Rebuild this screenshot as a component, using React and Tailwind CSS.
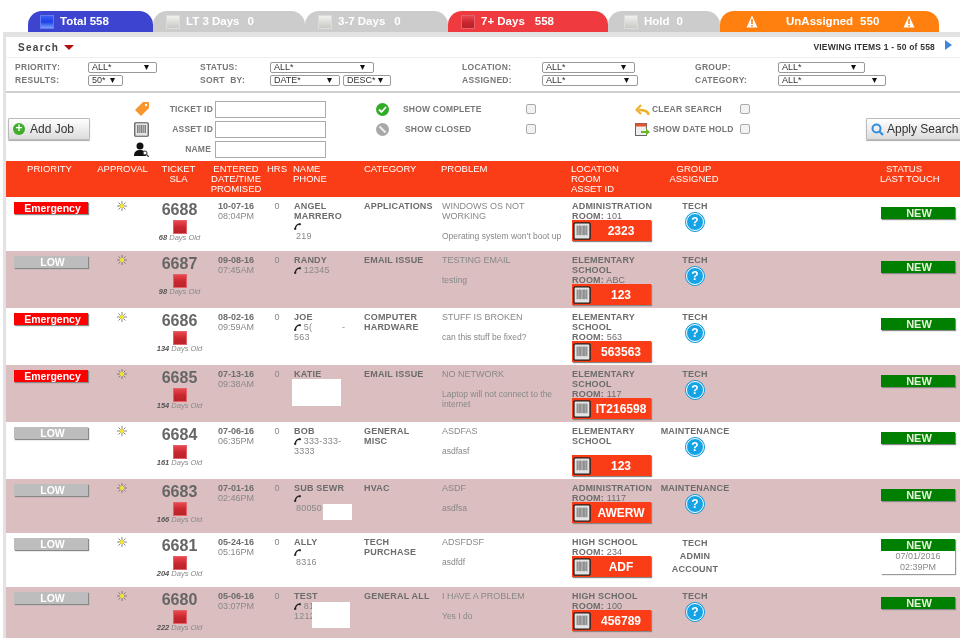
import React from 'react';

const tabs = [
  { label: 'Total', count: '558', w: 'w-[125px]', bg: 'bg-[#3d45d0]', box: 'blue', pl: 'pl-[12px]', numGap: 'ml-[3px]' },
  { label: 'LT 3 Days', count: '0', w: 'w-[152px]', bg: 'bg-[#cccccc]', box: 'gray', pl: 'pl-[13px]', numGap: 'ml-[8px]' },
  { label: '3-7 Days', count: '0', w: 'w-[143px]', bg: 'bg-[#cccccc]', box: 'gray', pl: 'pl-[13px]', numGap: 'ml-[9px]' },
  { label: '7+ Days', count: '558', w: 'w-[160px]', bg: 'bg-[#ef3b3f]', box: 'red', pl: 'pl-[13px]', numGap: 'ml-[10px]' },
  { label: 'Hold', count: '0', w: 'w-[112px]', bg: 'bg-[#cccccc]', box: 'gray', pl: 'pl-[16px]', numGap: 'ml-[7px]' },
];

const rows = [
  { pri: 'Emergency', id: '6688', age: '68', date: '10-07-16', time: '08:04PM', name: ['ANGEL', 'MARRERO'], phone: [null, '219'], cat: ['APPLICATIONS'], prob: ['WINDOWS OS NOT', 'WORKING'], desc: "Operating system won't boot up", loc: ['ADMINISTRATION'], room: '101', asset: '2323', group: ['TECH'], h: 'h-[54px]' },
  { pri: 'LOW', id: '6687', age: '98', date: '09-08-16', time: '07:45AM', name: ['RANDY'], phone: ['12345'], cat: ['EMAIL ISSUE'], prob: ['TESTING EMAIL'], desc: 'testing', loc: ['ELEMENTARY', 'SCHOOL'], room: 'ABC', asset: '123', group: ['TECH'], h: 'h-[57px]' },
  { pri: 'Emergency', id: '6686', age: '134', date: '08-02-16', time: '09:59AM', name: ['JOE'], phone: ['5(', '563'], dash: true, cat: ['COMPUTER', 'HARDWARE'], prob: ['STUFF IS BROKEN'], desc: 'can this stuff be fixed?', loc: ['ELEMENTARY', 'SCHOOL'], room: '563', asset: '563563', group: ['TECH'], h: 'h-[57px]' },
  { pri: 'Emergency', id: '6685', age: '154', date: '07-13-16', time: '09:38AM', name: ['KATIE'], redact: 'left-[1px] top-[14px] w-[49px] h-[27px]', cat: ['EMAIL ISSUE'], prob: ['NO NETWORK'], desc: 'Laptop will not connect to the internet', loc: ['ELEMENTARY', 'SCHOOL'], room: '117', asset: 'IT216598', group: ['TECH'], h: 'h-[57px]' },
  { pri: 'LOW', id: '6684', age: '161', date: '07-06-16', time: '06:35PM', name: ['BOB'], phone: ['333-333-', '3333'], cat: ['GENERAL', 'MISC'], prob: ['ASDFAS'], desc: 'asdfasf', loc: ['ELEMENTARY', 'SCHOOL'], asset: '123', blankRoom: true, group: ['MAINTENANCE'], h: 'h-[57px]' },
  { pri: 'LOW', id: '6683', age: '166', date: '07-01-16', time: '02:46PM', name: ['SUB SEWR'], phone: [null, '80050'], redact: 'left-[32px] top-[25px] w-[29px] h-[16px]', cat: ['HVAC'], prob: ['ASDF'], desc: 'asdfsa', loc: ['ADMINISTRATION'], room: '1117', asset: 'AWERW', group: ['MAINTENANCE'], h: 'h-[54px]' },
  { pri: 'LOW', id: '6681', age: '204', date: '05-24-16', time: '05:16PM', name: ['ALLY'], phone: [null, '8316'], cat: ['TECH', 'PURCHASE'], prob: ['ADSFDSF'], desc: 'asdfdf', loc: ['HIGH SCHOOL'], room: '234', asset: 'ADF', group: ['TECH', 'ADMIN', 'ACCOUNT'], touch: ['07/01/2016', '02:39PM'], h: 'h-[54px]' },
  { pri: 'LOW', id: '6680', age: '222', date: '05-06-16', time: '03:07PM', name: ['TEST'], phone: ['81', '1212'], redact: 'left-[21px] top-[15px] w-[38px] h-[26px]', cat: ['GENERAL ALL'], prob: ['I HAVE A PROBLEM'], desc: 'Yes I do', loc: ['HIGH SCHOOL'], room: '100', asset: '456789', group: ['TECH'], h: 'h-[54px]' },
];

const rowGrid = 'grid grid-cols-[87px_59px_53px_62px_24px_69px_80px_131px_90px_70px_149px_80px]';

const Square = ({ tone }) => {
  const cls = {
    blue: 'from-[#3f5cf5] via-[#1d3fe6] to-[#7d9bff] border-[#5f7cf0]',
    gray: 'from-[#f0f0ee] to-[#c9c9c5] border-[#dcdcd8]',
    red: 'from-[#e8474e] via-[#cb262e] to-[#b8242b] border-[#e4636a]',
  }[tone];
  return <span className={`block w-[14px] h-[14px] border bg-linear-to-b shrink-0 ${cls}`} />;
};

const Warn = () => (
  <svg width="12" height="13" viewBox="0 0 12 13">
    <path d="M6 .5 11.5 12.5H.5Z" fill="#fff" />
    <rect x="5.2" y="4" width="1.6" height="5" fill="#ff7f0f" />
    <rect x="5.2" y="10" width="1.6" height="1.5" fill="#ff7f0f" />
  </svg>
);

const Sel = ({ w, children = 'ALL*', arrow }) => (
  <div className={`relative h-[11px] ${w} border border-[#999] rounded-[2px] bg-white text-[9px] leading-[9px] pl-[3px] text-[#333]`}>
    {children}
    <svg className={`absolute top-[2px] ${arrow}`} width="5" height="5" viewBox="0 0 5 5"><path d="M0 0H5L2.5 5Z" fill="#111" /></svg>
  </div>
);

const Label = ({ children }) => (
  <div className="text-[8.5px] leading-[11px] font-bold text-[#777] tracking-[0.3px] whitespace-nowrap">{children}</div>
);

const Check = () => (
  <input type="checkbox" className="appearance-none block w-[10px] h-[10px] border border-[#aaa] rounded-[2px] bg-[#f2f2f2]" />
);

const Field = () => (
  <div className="pl-[2px]"><input className="block w-[111px] h-[17px] border border-[#aaa] bg-white" /></div>
);

const Btn = ({ w, children }) => (
  <div className={`${w} h-[22px] border border-[#bbb] rounded-[1px] bg-linear-to-b from-white to-[#dcdcdc] flex items-center pl-[4px] text-[12px] font-normal tracking-normal text-[#333] shadow-[0_1px_1px_#aaa]`}>
    {children}
  </div>
);

const Barcode = ({ size = 15, frame = '#555' }) => (
  <svg width={size} height={size} viewBox="0 0 15 15">
    <rect x=".75" y=".75" width="13.5" height="13.5" rx="1" fill="#e4e4e4" stroke={frame} strokeWidth="1.2" />
    <path d="M3.5 3v8M5 3v8M6 3v8M7.5 3v8M9 3v8M10 3v8M11.5 3v8" stroke="#666" strokeWidth=".8" />
  </svg>
);

const Sun = () => (
  <svg width="10" height="10" viewBox="0 0 10 10">
    <path d="M5 0v10M0 5h10M1.500 1.500l7 7M8.500 1.500l-7 7" stroke="#666" strokeWidth=".8" />
    <circle cx="5" cy="5" r="2.2" fill="#f2e23a" />
  </svg>
);

const PhoneIcon = () => (
  <svg className="inline-block align-[-1px]" width="7" height="7" viewBox="0 0 7 7">
    <path d="M6.500 1.200C3.500.8 1.400 2.600 1.200 6.200" fill="none" stroke="#222" strokeWidth="1.3" />
    <rect x="4.800" y=".4" width="2" height="1.800" fill="#222" />
    <rect x=".2" y="4.800" width="2" height="2" fill="#222" />
  </svg>
);

const Question = () => (
  <div className="w-[20px] h-[20px] rounded-full bg-[#14a4e6] border border-[#1a9ad6] flex items-center justify-center">
    <div className="w-[18px] h-[18px] rounded-full border-[1.5px] border-white flex items-center justify-center text-white font-bold text-[12px] leading-none tracking-normal">?</div>
  </div>
);

const Row = ({ r, alt }) => (
  <div className={`${rowGrid} ${r.h} overflow-hidden text-[9px] leading-[10px] text-[#6c6c6c] ${alt ? 'bg-[#dbbfc0]' : 'bg-white'}`}>
    <div className="pl-[8px] pt-[5px]">
      <div className={`w-[74px] h-[12px] pl-[3px] flex items-center justify-center text-white font-bold text-[10.5px] leading-none shadow-[1px_1px_1px_#888] ${r.pri === 'LOW' ? 'bg-[#bdbdbd]' : 'bg-[#ff0000]'}`}>{r.pri}</div>
    </div>
    <div className="flex justify-center pt-[4px] pr-[2px]"><div><Sun /></div></div>
    <div className="flex flex-col items-center pt-[4px] pl-[2px]">
      <div className="text-[16px] leading-[18px] font-bold text-[#666]">{r.id}</div>
      <div className="mt-[1px]"><Square tone="red" /></div>
      <div className="text-[7.5px] leading-[10px] italic text-[#888] whitespace-nowrap mt-[-1px]"><b className="text-[#555]">{r.age}</b> Days Old</div>
    </div>
    <div className="pl-[13px] pt-[4px]">
      <div className="font-bold">{r.date}</div>
      <div className="text-[#888]">{r.time}</div>
    </div>
    <div className="text-center pr-[4px] pt-[4px] text-[#888]">0</div>
    <div className="relative pl-[3px] pt-[4px] tracking-[0.2px]">
      {r.name.map((n) => <div key={n} className="font-bold whitespace-nowrap">{n}</div>)}
      {r.phone && (
        <div className="text-[#888]">
          <div className="whitespace-nowrap"><PhoneIcon /> {r.phone[0]}{r.dash && <span className="ml-[30px]">-</span>}</div>
          {r.phone[1] && <div className={r.phone[0] ? '' : 'pl-[2px]'}>{r.phone[1]}</div>}
        </div>
      )}
      {r.redact && <div className={`absolute bg-white ${r.redact}`} />}
    </div>
    <div className="pl-[4px] pt-[4px] font-bold tracking-[0.2px]">
      {r.cat.map((c) => <div key={c} className="whitespace-nowrap">{c}</div>)}
    </div>
    <div className="pl-[2px] pt-[4px] pr-[2px] text-[#888]">
      {r.prob.map((p) => <div key={p}>{p}</div>)}
      <div className="text-[8.5px] mt-[10px]">{r.desc}</div>
    </div>
    <div className="pl-[1px] pt-[4px] tracking-[0.2px]">
      {r.loc.map((l) => <div key={l} className="font-bold whitespace-nowrap">{l}</div>)}
      {r.blankRoom ? <div className="h-[10px]" /> : <div><b>ROOM:</b> {r.room}</div>}
      <div className="w-[79px] h-[21px] -mt-[1px] bg-[#fb3d17] flex items-center shadow-[1px_1px_1px_#888] tracking-normal">
        <div className="ml-[1px] w-[18px] h-[18px] shrink-0 flex"><Barcode size={18} frame="#222" /></div>
        <div className="flex-1 text-center text-white font-bold text-[12px] leading-none">{r.asset}</div>
      </div>
    </div>
    <div className="flex flex-col items-center pt-[4px] pr-[2px] font-bold whitespace-nowrap tracking-[0.2px]">
      {r.group.length > 1
        ? r.group.map((g) => <div key={g} className="leading-[13px]">{g}</div>)
        : <div>{r.group[0]}</div>}
      {r.group.length === 1 && <div className="mt-[1px]"><Question /></div>}
    </div>
    <div />
    <div className={`${r.touch ? 'pt-[6px]' : 'pt-[10px]'} pl-[1px]`}>
      <div className="w-[74px] h-[12px] pl-[2px] bg-[#008000] flex items-center justify-center text-[#e4f4d8] font-bold text-[11px] leading-none shadow-[1px_1px_1px_#888]">NEW</div>
      {r.touch && (
        <div className="w-[74px] bg-white text-center text-[#888] leading-[11px] shadow-[1px_1px_1px_#999] pb-[1px]">
          {r.touch.map((t) => <div key={t}>{t}</div>)}
        </div>
      )}
    </div>
  </div>
);

export default function App() {
  return (
    <div className="w-[960px] h-[638px] overflow-hidden bg-white blur-[0.5px] font-['Liberation_Sans',Arial,sans-serif]">
      {/* tabs */}
      <div className="flex pt-[11px] pl-[28px] h-[32px]">
        {tabs.map((t) => (
          <div key={t.label} className={`${t.w} ${t.bg} ${t.pl} h-[21px] rounded-t-[14px] flex items-center text-white font-bold text-[11.5px] whitespace-nowrap`}>
            <Square tone={t.box} />
            <span className="ml-[6px]">{t.label}</span>
            <span className={t.numGap}>{t.count}</span>
          </div>
        ))}
        <div className="w-[219px] h-[21px] bg-[#ff7f0f] rounded-t-[14px] flex items-center text-white font-bold text-[11.5px] whitespace-nowrap pl-[26px]">
          <Warn />
          <span className="ml-[28px]">UnAssigned</span>
          <span className="ml-[7px]">550</span>
          <span className="ml-[24px]"><Warn /></span>
        </div>
      </div>

      <div className="ml-[3px] border-l-[3px] border-[#e2e2e2]">
        <div className="h-[5px] bg-[#e2e2e2] -ml-[3px]" />
        {/* search title */}
        <div className="h-[21px] flex items-center justify-between border-b border-[#eee]">
          <div className="flex items-center ml-[12px] text-[10px] font-bold text-[#444] tracking-[1.3px]">
            Search
            <svg className="ml-[5px]" width="10" height="5" viewBox="0 0 10 5"><path d="M0 0H10L5 5Z" fill="#b01010" /></svg>
          </div>
          <div className="flex items-center text-[8.5px] font-bold text-[#333] tracking-[0.2px] mr-[8px]">
            VIEWING ITEMS 1 - 50 of 558
            <svg className="ml-[10px] -mt-[4px]" width="7" height="10" viewBox="0 0 7 10"><path d="M0 0L7 5 0 10Z" fill="#3f86e0" /></svg>
          </div>
        </div>

        {/* filters */}
        <div className="grid grid-cols-[73px_112px_70px_192px_80px_153px_83px_1fr] gap-y-[1px] pl-[9px] pt-[4px] pb-[5px] items-center h-[33px]">
          <Label>PRIORITY:</Label><Sel w="w-[69px]" arrow="right-[7px]" />
          <Label>STATUS:</Label><Sel w="w-[104px]" arrow="right-[8px]" />
          <Label>LOCATION:</Label><Sel w="w-[93px]" arrow="right-[8px]" />
          <Label>GROUP:</Label><Sel w="w-[87px]" arrow="right-[8px]" />
          <Label>RESULTS:</Label><Sel w="w-[35px]" arrow="right-[7px]">50*</Sel>
          <Label>SORT&nbsp; BY:</Label>
          <div className="flex gap-[3px]">
            <Sel w="w-[70px]" arrow="right-[7px]">DATE*</Sel>
            <Sel w="w-[48px]" arrow="right-[7px]">DESC*</Sel>
          </div>
          <Label>ASSIGNED:</Label><Sel w="w-[96px]" arrow="right-[8px]" />
          <Label>CATEGORY:</Label><Sel w="w-[108px]" arrow="right-[8px]" />
        </div>
        <div className="h-[2px] bg-[#cfcfcf]" />

        {/* search form */}
        <div className="grid grid-cols-[2px_126px_16px_63px_163px_27px_123px_109px_17px_88px_126px_1fr] grid-rows-[20px_20px_20px] pt-[6px] h-[68px] items-center text-[8.5px] font-bold text-[#777] tracking-[0.2px] whitespace-nowrap">
          <div className="row-span-3" />
          <div className="row-span-3">
            <Btn w="w-[82px]">
              <span className="w-[12px] h-[12px] rounded-full bg-[#3fae2a] text-white font-bold text-[12px] leading-[11px] text-center mr-[5px]">+</span>
              Add Job
            </Btn>
          </div>
          <div>
            <svg width="16" height="16" viewBox="0 0 16 16"><path d="M9 1h6v6L7 15 1 9Z" fill="#f8952b" /><circle cx="12" cy="4" r="1.2" fill="#fff" /></svg>
          </div>
          <div className="text-right">TICKET ID</div>
          <Field />
          <div>
            <div className="w-[13px] h-[13px] rounded-full bg-[#32ab27] text-white flex items-center justify-center">
              <svg width="9" height="9" viewBox="0 0 9 9"><path d="M1 4.500 3.500 7 8 2" fill="none" stroke="#fff" strokeWidth="1.8" /></svg>
            </div>
          </div>
          <div>SHOW COMPLETE</div>
          <div><Check /></div>
          <div>
            <svg width="15" height="13" viewBox="0 0 15 13"><path d="M13.500 12C13.500 8 10 7 3.500 7" fill="none" stroke="#efb02a" strokeWidth="2.400" /><path d="M6 2 1.500 7 6 11" fill="none" stroke="#efb02a" strokeWidth="2" /></svg>
          </div>
          <div>CLEAR SEARCH</div>
          <div><Check /></div>
          <div className="row-span-3">
            <Btn w="w-[96px]">
              <svg className="mr-[3px]" width="13" height="13" viewBox="0 0 13 13"><circle cx="5.500" cy="5.500" r="4" fill="none" stroke="#2f8fe0" strokeWidth="2" /><path d="M8.500 8.500 12 12" stroke="#2f8fe0" strokeWidth="2.200" /></svg>
              Apply Search
            </Btn>
          </div>

          <div><Barcode /></div>
          <div className="text-right">ASSET ID</div>
          <Field />
          <div>
            <div className="w-[13px] h-[13px] rounded-full bg-[#a8a8a8] flex items-center justify-center">
              <svg width="9" height="9" viewBox="0 0 9 9"><path d="M1.500 1.500l6 6" stroke="#eee" strokeWidth="2" /></svg>
            </div>
          </div>
          <div className="pl-[2px]">SHOW CLOSED</div>
          <div><Check /></div>
          <div>
            <svg width="15" height="15" viewBox="0 0 15 15"><rect x=".5" y="1.500" width="11" height="12" fill="#eee" stroke="#666" /><rect x=".5" y="1.500" width="11" height="3" fill="#e2542e" /><path d="M6 9h5V6.500L15 10l-4 3.500V11H6Z" fill="#6fb32c" /></svg>
          </div>
          <div className="pl-[1px]">SHOW DATE HOLD</div>
          <div><Check /></div>

          <div>
            <svg width="15" height="15" viewBox="0 0 15 15"><circle cx="6" cy="4" r="3.500" fill="#111" /><path d="M0 14c0-5 3-6 6-6s6 1 6 6Z" fill="#111" /><circle cx="11" cy="11" r="2" fill="#fff" stroke="#333" /><path d="M12.500 12.500 15 15" stroke="#333" strokeWidth="1.200" /></svg>
          </div>
          <div className="text-right pr-[2px]">NAME</div>
          <Field />
        </div>

        {/* table */}
        <div className={`${rowGrid} h-[36px] bg-[#fb3d17] text-white text-[9.5px] leading-[10px] pt-[3px] text-center`}>
          <div>PRIORITY</div>
          <div>APPROVAL</div>
          <div>TICKET<br />SLA</div>
          <div>ENTERED<br />DATE/TIME<br />PROMISED</div>
          <div className="whitespace-nowrap pr-[4px]">HRS</div>
          <div className="text-left pl-[2px]">NAME<br />PHONE</div>
          <div className="text-left pl-[4px]">CATEGORY</div>
          <div className="text-left pl-[1px]">PROBLEM</div>
          <div className="text-left">LOCATION<br />ROOM<br />ASSET ID</div>
          <div className="whitespace-nowrap pr-[4px]">GROUP<br />ASSIGNED</div>
          <div />
          <div className="whitespace-nowrap pr-[32px]">STATUS<br />LAST TOUCH</div>
        </div>
        {rows.map((r, i) => <Row key={r.id} r={r} alt={i % 2 === 1} />)}
      </div>
    </div>
  );
}
